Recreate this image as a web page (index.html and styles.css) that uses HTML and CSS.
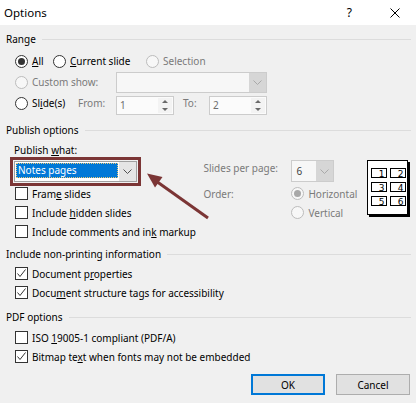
FILE: index.html
```html
<!DOCTYPE html>
<html>
<head>
<meta charset="utf-8">
<title>Options</title>
<link rel="stylesheet" href="styles.css">
</head>
<body>
<div class="titlebar">
  <span class="title">Options</span>
  <span class="help">?</span>
  <svg class="close" width="10" height="10" viewBox="0 0 10 10"><path d="M0.5 0.5 L9.5 9.5 M9.5 0.5 L0.5 9.5" stroke="#000" stroke-width="1" fill="none"/></svg>
</div>
<div class="content">
  <div class="sec-head sec-range">Range</div>
  <div class="row r-radios">
    <div class="opt w-all"><span class="radio on"></span><span><u>A</u>ll</span></div>
    <div class="opt w-cur"><span class="radio"></span><span><u>C</u>urrent slide</span></div>
    <div class="opt dis"><span class="radio"></span><span>Selection</span></div>
  </div>
  <div class="row r-custom">
    <div class="opt dis w-custom"><span class="radio"></span><span>Custom show:</span></div>
    <div class="combo dis w-customcombo"><span class="combo-val"></span><span class="combo-btn"><svg width="9" height="5" viewBox="0 0 9 5"><polyline points="0.5,0.5 4.5,4.5 8.5,0.5" fill="none" stroke="#a9a9a9"/></svg></span></div>
  </div>
  <div class="row r-slides">
    <div class="opt w-slides"><span class="radio"></span><span>Sl<u>i</u>de(s)</span></div>
    <span class="lbl dis w-from">From:</span>
    <div class="spin"><span class="spin-val">1</span><span class="spin-btns"><span class="sb"><span class="tri-up"></span></span><span class="sb"><span class="tri-down"></span></span></span></div>
    <span class="lbl dis w-to">To:</span>
    <div class="spin"><span class="spin-val">2</span><span class="spin-btns"><span class="sb"><span class="tri-up"></span></span><span class="sb"><span class="tri-down"></span></span></span></div>
  </div>

  <div class="sec-head sec-publish">Publish options</div>
  <div class="publish">
    <div class="pub-left">
      <div class="pub-what">Publish <u>w</u>hat:</div>
      <div class="hl-box">
        <div class="combo focus">
          <span class="combo-val"><span class="sel">Notes pages</span></span>
          <span class="combo-btn"><svg width="9" height="5" viewBox="0 0 9 5"><polyline points="0.5,0.5 4.5,4.5 8.5,0.5" fill="none" stroke="#505050"/></svg></span>
        </div>
      </div>
      <div class="chk-row first"><span class="check"></span><span>Fram<u>e</u> slides</span></div>
      <div class="chk-row"><span class="check"></span><span>Include <u>h</u>idden slides</span></div>
      <div class="chk-row"><span class="check"></span><span>Include comments and in<u>k</u> markup</span></div>
    </div>
    <div class="pub-mid">
      <div class="mid-row spp">
        <span class="mid-label dis">Slides per page:</span>
        <div class="combo dis w-spp"><span class="combo-val">6</span><span class="combo-btn"><svg width="9" height="5" viewBox="0 0 9 5"><polyline points="0.5,0.5 4.5,4.5 8.5,0.5" fill="none" stroke="#a9a9a9"/></svg></span></div>
      </div>
      <div class="mid-row ord">
        <span class="mid-label dis">Order:</span>
        <div class="opt dis"><span class="radio on"></span><span>Horizontal</span></div>
      </div>
      <div class="mid-row">
        <span class="mid-label"></span>
        <div class="opt dis"><span class="radio"></span><span>Vertical</span></div>
      </div>
    </div>
    <div class="pub-icon">
      <svg width="44" height="57" viewBox="0 0 44 57">
        <rect x="0.5" y="0.5" width="40" height="54" fill="#fff" stroke="#000"/>
        <rect x="41" y="2" width="2" height="55" fill="#000"/>
        <rect x="2" y="55" width="41" height="2" fill="#000"/>
        <g fill="#fff" stroke="#000">
          <rect x="4.5" y="8.5" width="15" height="9"/>
          <rect x="23.5" y="8.5" width="15" height="9"/>
          <rect x="4.5" y="22.5" width="15" height="9"/>
          <rect x="23.5" y="22.5" width="15" height="9"/>
          <rect x="4.5" y="36.5" width="15" height="9"/>
          <rect x="23.5" y="36.5" width="15" height="9"/>
        </g>
        <g class="icon-num" text-anchor="end">
          <text x="17.5" y="16.5">1</text>
          <text x="36.5" y="16.5">2</text>
          <text x="17.5" y="30.5">3</text>
          <text x="36.5" y="30.5">4</text>
          <text x="17.5" y="44.5">5</text>
          <text x="36.5" y="44.5">6</text>
        </g>
      </svg>
    </div>
  </div>

  <div class="sec-head sec-nonprint">Include non-printing information</div>
  <div class="chk-row np-first"><span class="check on"><svg width="11" height="11" viewBox="0 0 11 11"><polyline points="1.5,5.5 4,8.5 9.5,1.5" fill="none" stroke="#333" stroke-width="1"/></svg></span><span>Document p<u>r</u>operties</span></div>
  <div class="chk-row"><span class="check on"><svg width="11" height="11" viewBox="0 0 11 11"><polyline points="1.5,5.5 4,8.5 9.5,1.5" fill="none" stroke="#333" stroke-width="1"/></svg></span><span>Docu<u>m</u>ent structure tags for accessibility</span></div>

  <div class="sec-head sec-pdf">PDF options</div>
  <div class="chk-row pdf-first"><span class="check"></span><span>ISO <u>1</u>9005-1 compliant (PDF/A)</span></div>
  <div class="chk-row"><span class="check on"><svg width="11" height="11" viewBox="0 0 11 11"><polyline points="1.5,5.5 4,8.5 9.5,1.5" fill="none" stroke="#333" stroke-width="1"/></svg></span><span>Bitmap te<u>x</u>t when fonts may not be embedded</span></div>

  <div class="buttons">
    <div class="btn default">OK</div>
    <div class="btn">Cancel</div>
  </div>
</div>

<svg class="annot" width="416" height="403" viewBox="0 0 416 403">
  <line x1="208" y1="218" x2="156" y2="181" stroke="#7b3535" stroke-width="3"/>
  <polygon points="147,173.5 162.5,177 155,187.5" fill="#7b3535"/>
</svg>
</body>
</html>
```
FILE: styles.css
```css
* { box-sizing: border-box; }
html, body { margin: 0; padding: 0; }
body {
  width: 416px;
  height: 403px;
  overflow: hidden;
  position: relative;
  background: #f0f0f0;
  font-family: "Noto Sans", "DejaVu Sans", sans-serif;
  font-size: 10px;
  line-height: 14px;
  color: #000;
}
u { text-decoration: underline; text-underline-offset: 1px; }

.titlebar {
  height: 25px;
  background: #fff;
  display: flex;
  align-items: center;
  padding-left: 4px;
  font-size: 11.5px;
}
.title { flex: 1; }
.help { margin-right: 38px; font-size: 12px; }
.close { display: block; margin-right: 16px; }

.content { padding: 0 5px 0 6px; }

.sec-head { display: flex; align-items: center; height: 14px; }
.sec-head::after {
  content: "";
  flex: 1;
  border-top: 1px solid #dcdcdc;
  margin-left: 6px;
}
.sec-range { margin-top: 7px; }
.sec-publish { margin-top: 8px; }
.sec-nonprint { margin-top: 6px; }
.sec-pdf { margin-top: 8px; }

.row { display: flex; align-items: center; padding-left: 9px; }
.r-radios { margin-top: 5px; height: 20px; }
.r-custom { height: 22px; }
.r-slides { margin-top: 3px; height: 19px; align-items: flex-start; }

.opt { display: flex; align-items: center; gap: 4px; flex: none; }
.w-all { width: 38px; }
.w-cur { width: 93px; }
.w-custom { width: 101px; }
.w-slides { width: 63px; }
.w-from { width: 38px; }
.w-to { width: 26px; margin-left: 9px; }
.lbl { display: block; }

.radio {
  width: 13px;
  height: 13px;
  border: 1px solid #333;
  border-radius: 50%;
  background: #fff;
  display: flex;
  align-items: center;
  justify-content: center;
  flex: none;
}
.radio.on::after {
  content: "";
  width: 7px;
  height: 7px;
  border-radius: 50%;
  background: #333;
}
.dis { color: #7a7a7a; }
.dis .radio { border-color: #bcbcbc; background: #f7f7f7; }
.dis .radio.on::after { background: #a8a8a8; }

.combo {
  display: flex;
  height: 21px;
  border: 1px solid #a0a0a0;
  background: #fff;
}
.combo-val { flex: 1; display: flex; align-items: center; padding-left: 3px; }
.combo-btn {
  width: 17px;
  display: flex;
  align-items: center;
  justify-content: center;
  background: #e5e5e5;
}
.combo.dis { border-color: #cccccc; background: #f7f7f7; }
.combo.dis .combo-btn { background: #d6d6d6; }
.w-customcombo { width: 151px; }
.w-spp { width: 43px; height: 22px; }
.w-spp .combo-val { color: #444; padding-left: 4px; }

.focus .combo-val { padding: 1px 1px 3px 1px; align-items: stretch; }
.sel {
  flex: 1;
  background: #0078d7;
  color: #fff;
  outline: 1px dotted #e8c87a;
  outline-offset: -1px;
  padding-left: 2px;
  line-height: 15px;
}

.spin {
  width: 58px;
  height: 19px;
  border: 1px solid #cccccc;
  background: #fbfbfb;
  display: flex;
}
.spin-val { flex: 1; padding-left: 3px; line-height: 17px; color: #6d6d6d; }
.spin-btns { width: 16px; display: flex; flex-direction: column; padding: 1px; }
.sb {
  flex: 1;
  display: flex;
  align-items: center;
  justify-content: center;
  background: #f3f3f3;
}
.tri-up {
  width: 0; height: 0;
  border-left: 3px solid transparent;
  border-right: 3px solid transparent;
  border-bottom: 3px solid #6a6a6a;
}
.tri-down {
  width: 0; height: 0;
  border-left: 3px solid transparent;
  border-right: 3px solid transparent;
  border-top: 3px solid #6a6a6a;
}

.publish { display: flex; margin-top: 6px; }
.pub-left { width: 198px; }
.pub-what { padding-left: 8px; height: 15px; line-height: 15px; }
.hl-box {
  width: 131px;
  height: 29px;
  margin-left: 4px;
  margin-top: -1px;
  border: 3px solid #7b3535;
  padding: 1px;
}
.hl-box .combo { height: 21px; }

.chk-row { display: flex; align-items: center; gap: 4px; height: 19px; padding-left: 9px; }
.chk-row.first { margin-top: -2px; }
.np-first { margin-top: 3px; }
.pdf-first { margin-top: 4px; }
.check {
  width: 13px;
  height: 13px;
  border: 1px solid #333;
  background: #fff;
  flex: none;
  display: flex;
}
.check svg { display: block; }

.pub-mid { width: 164px; padding-top: 17px; }
.mid-row { display: flex; align-items: center; height: 19px; }
.mid-row.spp { height: 22px; align-items: flex-start; }
.mid-row.spp .mid-label { padding-top: 1px; }
.mid-row.ord { margin-top: 2px; }
.mid-label { width: 88px; flex: none; }

.pub-icon { padding-top: 17px; }
.pub-icon svg { display: block; }
.icon-num { font-family: "DejaVu Sans", sans-serif; font-size: 9px; fill: #000; }

.buttons { display: flex; justify-content: flex-end; gap: 11px; margin-top: 8px; padding-right: 1px; }
.btn {
  width: 74px;
  height: 21px;
  border: 1px solid #adadad;
  background: #e1e1e1;
  display: flex;
  align-items: center;
  justify-content: center;
}
.btn.default { border: 2px solid #0078d7; }

.annot { position: absolute; left: 0; top: 0; pointer-events: none; }
```
